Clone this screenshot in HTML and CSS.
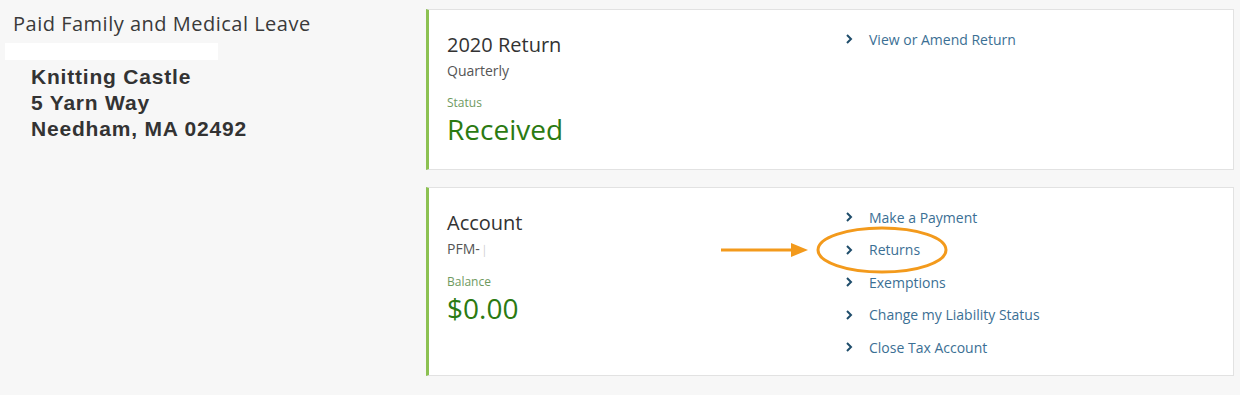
FILE: index.html
```html
<!DOCTYPE html>
<html lang="en">
<head>
    <meta charset="UTF-8">
    <meta name="viewport" content="width=device-width, initial-scale=1.0">
    <title>Paid Family and Medical Leave</title>
    <link rel="stylesheet" href="styles.css">
</head>
<body>
    <div class="page">
        <div class="sidebar">
            <div class="program">Paid Family and Medical Leave</div>
            <div class="redact redact-one"></div>
            <div class="address">
                <div class="redact redact-two"></div>
                Knitting Castle<br>
                5 Yarn Way<br>
                Needham, MA 02492
            </div>
        </div>

        <div class="main">
            <div class="card">
                <div class="card-info">
                    <div class="card-title">2020 Return</div>
                    <div class="card-sub">Quarterly</div>
                    <div class="card-label">Status</div>
                    <div class="card-value">Received</div>
                </div>
                <ul class="links">
                    <li><svg class="chev" viewBox="0 0 8 10"><polyline points="2,1 6,5 2,9"/></svg><a href="#">View or Amend Return</a></li>
                </ul>
            </div>

            <div class="card">
                <div class="card-info">
                    <div class="card-title">Account</div>
                    <div class="card-sub">PFM-<span class="dim">&#x2502;</span></div>
                    <div class="card-label">Balance</div>
                    <div class="card-value">$0.00</div>
                </div>
                <ul class="links">
                    <li><svg class="chev" viewBox="0 0 8 10"><polyline points="2,1 6,5 2,9"/></svg><a href="#">Make a Payment</a></li>
                    <li class="marked"><svg class="chev" viewBox="0 0 8 10"><polyline points="2,1 6,5 2,9"/></svg><a href="#">Returns</a>
                        <!-- hand-drawn highlight over the link -->
                        <svg class="callout" width="240" height="56" viewBox="0 0 240 56">
                            <line x1="4" y1="28" x2="76" y2="28"/>
                            <polygon points="74,21 91,28 74,35"/>
                            <ellipse cx="165" cy="28" rx="64" ry="22"/>
                        </svg>
                    </li>
                    <li><svg class="chev" viewBox="0 0 8 10"><polyline points="2,1 6,5 2,9"/></svg><a href="#">Exemptions</a></li>
                    <li><svg class="chev" viewBox="0 0 8 10"><polyline points="2,1 6,5 2,9"/></svg><a href="#">Change my Liability Status</a></li>
                    <li><svg class="chev" viewBox="0 0 8 10"><polyline points="2,1 6,5 2,9"/></svg><a href="#">Close Tax Account</a></li>
                </ul>
            </div>
        </div>
    </div>
</body>
</html>
```

FILE: styles.css
```css
body {
    margin: 0;
    background-color: #f7f7f7;
    font-family: "Open Sans", "Noto Sans", sans-serif;
    color: #333;
}
.page {
    display: flex;
    padding-top: 9px;
}
.sidebar {
    width: 426px;
    flex-shrink: 0;
    position: relative;
}
.program {
    font-size: 20px;
    letter-spacing: 0.5px;
    color: #3a3a3a;
    padding-left: 13px;
    line-height: 26px;
    margin-top: 2px;
}
.redact {
    position: absolute;
    background-color: #fff;
}
.redact-one {
    left: 5px;
    top: 34px;
    width: 213px;
    height: 17px;
}
.redact-two {
    left: -26px;
    top: 0;
    width: 20px;
    height: 40px;
}
.address {
    position: relative;
    margin-top: 27px;
    padding-left: 31px;
    font-family: "Liberation Sans", Arial, sans-serif;
    font-weight: bold;
    font-size: 21px;
    letter-spacing: 0.8px;
    line-height: 26px;
    color: #333;
}
.main {
    width: 808px;
    display: flex;
    flex-direction: column;
    gap: 17px;
}
.card {
    display: flex;
    background-color: #fff;
    border: 1px solid #e2e2e2;
    border-left: 3px solid #8cc152;
}
.card-info {
    width: 398px;
    padding: 22px 0 21px 18px;
}
.card-title {
    font-size: 20px;
    line-height: 26px;
    color: #333;
}
.card-sub {
    font-size: 14px;
    line-height: 20px;
    margin-top: 3px;
    color: #555;
}
.dim {
    color: #ccc;
    font-size: 10px;
    margin-left: 2px;
}
.card-label {
    font-size: 12px;
    line-height: 16px;
    margin-top: 14px;
    color: #6f9a5f;
}
.card-value {
    font-size: 28px;
    line-height: 37px;
    color: #2b7a12;
}
.links {
    list-style: none;
    margin: 0;
    padding: 13px 0 11px 0;
}
.links li {
    display: flex;
    align-items: center;
    height: 32.5px;
    position: relative;
}
.links a {
    font-size: 14px;
    color: #3b6f94;
    text-decoration: none;
}
.chev {
    width: 8px;
    height: 10px;
    margin-right: 16px;
}
.chev polyline {
    fill: none;
    stroke: #1f4d6b;
    stroke-width: 2;
}
.callout {
    position: absolute;
    left: -128px;
    top: -12px;
    overflow: visible;
}
.callout line {
    stroke: #f39a1c;
    stroke-width: 3;
}
.callout polygon {
    fill: #f39a1c;
}
.callout ellipse {
    fill: none;
    stroke: #f39a1c;
    stroke-width: 3;
}
```
